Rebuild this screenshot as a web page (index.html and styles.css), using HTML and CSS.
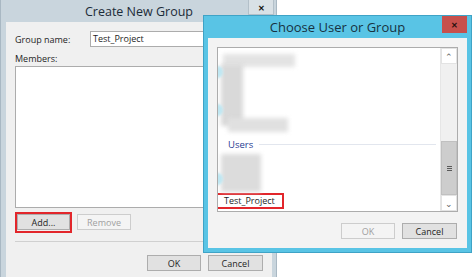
FILE: index.html
```html
<!DOCTYPE html>
<html lang="en">

<head>
  <meta charset="UTF-8">
  <meta name="viewport" content="width=device-width, initial-scale=1.0">
  <title>Create New Group</title>
  <link rel="stylesheet" href="styles.css">
</head>

<body>
  <div class="desktop">
    <div class="window group-window">
      <div class="titlebar">
        <span class="title">Create New Group</span>
        <span class="close">&#x2715;</span>
      </div>
      <div class="client">
        <div class="field-row">
          <label class="label">Group name:</label>
          <div class="textbox">Test_Project</div>
        </div>
        <div class="members-label">Members:</div>
        <div class="members-box"></div>
        <div class="member-buttons">
          <span class="highlight"><button class="btn">Add...</button></span>
          <button class="btn disabled">Remove</button>
        </div>
        <div class="separator"></div>
        <div class="dialog-buttons">
          <button class="btn">OK</button>
          <button class="btn">Cancel</button>
        </div>
      </div>
    </div>

    <div class="window chooser-window">
      <div class="titlebar">
        <span class="title">Choose User or Group</span>
        <span class="close red">&#x2715;</span>
      </div>
      <div class="client">
        <div class="listbox">
          <div class="list-items">
            <div class="blur-group top-group">
              <div class="blur b1"></div>
              <div class="blur b2"></div>
              <div class="blur b3"></div>
              <div class="icon-dot d1"></div>
              <div class="icon-dot d2"></div>
            </div>
            <div class="group-header">
              <span>Users</span>
              <div class="header-line"></div>
            </div>
            <div class="blur-group user-group">
              <div class="blur b4"></div>
              <div class="icon-dot d3"></div>
            </div>
            <div class="item-row">
              <span class="item selected">Test_Project</span>
            </div>
          </div>
          <div class="scrollbar">
            <div class="arrow">&#x2303;</div>
            <div class="track">
              <div class="thumb"><span class="grip"></span></div>
            </div>
            <div class="arrow">&#x2304;</div>
          </div>
        </div>
        <div class="dialog-buttons">
          <button class="btn disabled">OK</button>
          <button class="btn">Cancel</button>
        </div>
      </div>
    </div>
  </div>
</body>

</html>
```

FILE: styles.css
```css
* {
  margin: 0;
  box-sizing: border-box;
}

body {
  background-color: white;
  font-family: "Open Sans", "Noto Sans", sans-serif;
  font-size: 9px;
  color: #1e1e1e;
}

.desktop {
  position: relative;
  width: 474px;
  height: 280px;
  overflow: hidden;
}

.window {
  position: absolute;
  display: flex;
  flex-direction: column;
}

/* left dialog */

.group-window {
  left: 0;
  top: 0;
  width: 277px;
  height: 277px;
  background-color: #c9d5dd;
  border-left: 1px solid #a9b8c3;
  border-right: 1px solid #a9b8c3;
  padding: 0 4px 0 5px;
}

.titlebar {
  position: relative;
  height: 22px;
  display: flex;
  justify-content: center;
  align-items: center;
}

.title {
  font-size: 12.5px;
  color: #1b2b38;
}

.close {
  position: absolute;
  top: 0;
  right: -2px;
  width: 26px;
  height: 15px;
  background-color: #d9e1e6;
  border: 1px solid #b3c0c9;
  border-top: 0;
  font-size: 8px;
  font-weight: bold;
  display: flex;
  justify-content: center;
  align-items: center;
  color: #111;
}

.client {
  flex: 1;
  background-color: #f0f0f0;
  padding: 9px 9px 0 9px;
  display: flex;
  flex-direction: column;
}

.field-row {
  display: flex;
  align-items: center;
  height: 16px;
}

.label {
  width: 75px;
}

.textbox {
  flex: 1;
  height: 16px;
  background-color: white;
  border: 1px solid #acacac;
  padding-left: 2px;
  line-height: 14px;
}

.members-label {
  margin-top: 5px;
  height: 13px;
  line-height: 13px;
}

.members-box {
  margin-top: 1px;
  height: 142px;
  background-color: white;
  border: 1px solid #acacac;
}

.member-buttons {
  margin-top: 4px;
  display: flex;
  align-items: flex-start;
  gap: 5px;
}

.highlight {
  display: flex;
  border: 2px solid #e2262b;
  padding-bottom: 1px;
}

.btn {
  width: 54px;
  height: 16px;
  padding: 0;
  font-family: inherit;
  font-size: 9px;
  color: #1e1e1e;
  background-color: #e1e1e1;
  border: 1px solid #adadad;
}

.member-buttons .highlight .btn {
  width: 53px;
}

.member-buttons > .btn {
  margin-top: 2px;
}

.btn.disabled {
  color: #a0a0a0;
  background-color: #f4f4f4;
  border-color: #cdcdcd;
}

.separator {
  margin-top: 8px;
  height: 1px;
  background-color: #d0d0d0;
}

.dialog-buttons {
  margin-top: 13px;
  display: flex;
  justify-content: flex-end;
  gap: 7px;
}

.dialog-buttons .btn:last-child {
  width: 55px;
}

/* chooser dialog */

.chooser-window {
  left: 203px;
  top: 15px;
  width: 269px;
  height: 238px;
  background-color: #59c4e5;
  border: 1px solid #3fa3c6;
  padding: 0 4px 4px 4px;
}

.chooser-window .titlebar {
  height: 22px;
}

.chooser-window .title {
  font-size: 13px;
  color: #17323f;
}

.close.red {
  right: 0;
  width: 25px;
  height: 17px;
  background-color: #c7504c;
  border: 0;
  color: #2a1010;
}

.chooser-window .client {
  background-color: #f3f3f3;
  padding: 9px 9px 0 9px;
}

.listbox {
  height: 165px;
  background-color: white;
  border: 1px solid #acacac;
  display: flex;
}

.list-items {
  flex: 1;
  position: relative;
  overflow: hidden;
}

.blur-group {
  position: relative;
}

.top-group {
  height: 89px;
}

.user-group {
  height: 42px;
}

.blur {
  position: absolute;
  background-color: #d9d9d9;
  filter: blur(2px);
}

.b1 {
  left: 5px;
  top: 6px;
  width: 72px;
  height: 13px;
  background-color: #e3e3e3;
}

.b2 {
  left: 3px;
  top: 16px;
  width: 22px;
  height: 62px;
}

.b3 {
  left: 10px;
  top: 70px;
  width: 60px;
  height: 14px;
  background-color: #e0e0e0;
}

.b4 {
  left: 3px;
  top: 3px;
  width: 40px;
  height: 38px;
  background-color: #dcdcdc;
}

.icon-dot {
  position: absolute;
  left: -5px;
  width: 10px;
  height: 12px;
  border-radius: 50%;
  background-color: #bfe7f2;
  filter: blur(1px);
}

.d1 {
  top: 18px;
}

.d2 {
  top: 56px;
}

.d3 {
  top: 22px;
}

.group-header {
  display: flex;
  align-items: center;
  height: 14px;
  padding-left: 10px;
  color: #1f3d92;
  font-size: 9.5px;
}

.header-line {
  flex: 1;
  height: 1px;
  margin: 0 4px 0 6px;
  background-color: #e2e6ee;
}

.item-row {
  display: flex;
}

.item.selected {
  height: 16px;
  line-height: 12px;
  padding: 0 7px 0 6px;
  border: 2px solid #e2262b;
  margin-left: -2px;
}

.scrollbar {
  width: 17px;
  display: flex;
  flex-direction: column;
  background-color: #f0f0f0;
  border-left: 1px solid #e6e6e6;
}

.arrow {
  height: 16px;
  display: flex;
  justify-content: center;
  align-items: center;
  font-size: 9px;
  color: #606060;
  background-color: white;
  border: 1px solid #e3e3e3;
}

.track {
  flex: 1;
  display: flex;
  flex-direction: column;
  justify-content: flex-end;
}

.thumb {
  height: 54px;
  background-color: #cdcdcd;
  border: 1px solid #c0c0c0;
  display: flex;
  justify-content: center;
  align-items: center;
}

.grip {
  width: 5px;
  height: 5px;
  border-top: 1px solid #5a5a5a;
  border-bottom: 1px solid #5a5a5a;
  background: linear-gradient(#5a5a5a, #5a5a5a) center / 5px 1px no-repeat;
}

.chooser-window .dialog-buttons {
  margin-top: 11px;
  padding-right: 1px;
}
```
